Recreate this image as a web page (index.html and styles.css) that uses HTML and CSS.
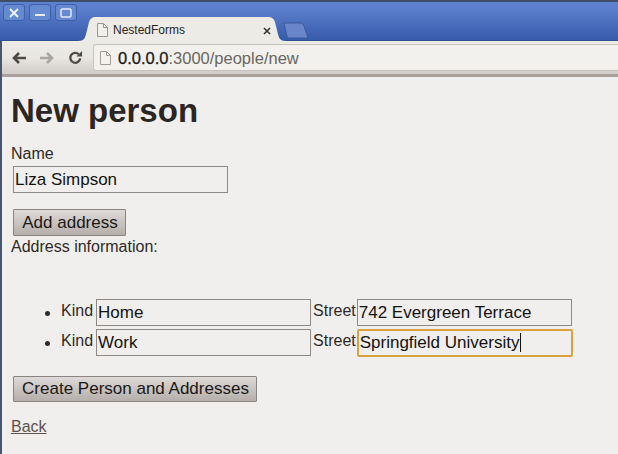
FILE: index.html
```html
<!DOCTYPE html>
<html lang="en">
<head>
<meta charset="utf-8">
<title>NestedForms</title>
<link rel="stylesheet" href="styles.css">
</head>
<body>
<div class="window">
  <header class="titlebar">
    <div class="wm-buttons">
      <span class="wm-btn"><svg width="14" height="14" viewBox="0 0 14 14"><path d="M3 3l8 8M11 3l-8 8" stroke="#eef2fa" stroke-width="2"/></svg></span>
      <span class="wm-btn"><svg width="14" height="14" viewBox="0 0 14 14"><path d="M2 9h10" stroke="#e4eaf6" stroke-width="2"/></svg></span>
      <span class="wm-btn"><svg width="14" height="14" viewBox="0 0 14 14"><rect x="2" y="3" width="10" height="8" rx="1.5" fill="none" stroke="#e4eaf6" stroke-width="1.5"/></svg></span>
    </div>
    <div class="tabstrip">
      <svg class="tab-shape" width="208" height="24" viewBox="0 0 210 26" preserveAspectRatio="none"><path d="M0 26c6 0 7-3 8-7l3-13c1-4 3-6 7-6h174c4 0 6 2 7 6l3 13c1 4 2 7 8 7z" fill="#ecebe6"/></svg>
      <div class="tab">
        <svg class="doc" width="11" height="14" viewBox="0 0 11 14"><path d="M.5.5h6l4 4v9h-10z" fill="#f1efe9" stroke="#9b9690"/><path d="M6.5.5v4h4" fill="none" stroke="#9b9690"/></svg>
        <span class="tab-title">NestedForms</span>
        <svg class="tab-close" width="8" height="8" viewBox="0 0 8 8"><path d="M1 1l6 6M7 1l-6 6" stroke="#38342f" stroke-width="1.6"/></svg>
      </div>
      <svg class="newtab" width="26" height="17" viewBox="0 0 26 17"><path d="M1 1h16c2 0 3 1 4 3l4 12H6c-1 0-2-1-2-2z" fill="#6a85c9" stroke="#3b5a9f"/></svg>
    </div>
  </header>
  <nav class="toolbar">
    <svg class="nav-arrow" width="15" height="14" viewBox="0 0 15 14"><path d="M15 7H3M8 2L3 7l5 5" fill="none" stroke="#4f4a45" stroke-width="2.6"/></svg>
    <svg class="nav-arrow" width="15" height="14" viewBox="0 0 15 14"><path d="M0 7h12M7 2l5 5-5 5" fill="none" stroke="#aaa69f" stroke-width="2.6"/></svg>
    <svg class="nav-reload" width="15" height="15" viewBox="0 0 16 15"><path d="M13 8.5A5.3 5.3 0 1 1 11.4 4" fill="none" stroke="#4f4a45" stroke-width="2.5"/><path d="M9 6.5h6v-6z" fill="#4f4a45"/></svg>
    <div class="omnibox">
      <svg width="11" height="14" viewBox="0 0 11 14"><path d="M.5.5h6l4 4v9h-10z" fill="#f4f2ee" stroke="#a09b95"/><path d="M6.5.5v4h4" fill="none" stroke="#a09b95"/></svg>
      <span class="url"><b>0.0.0.0</b>:3000/people/new</span>
    </div>
  </nav>
  <main class="page">
    <h1>New person</h1>
    <form class="person-form">
      <label class="name-label" for="name">Name</label>
      <input class="text-input name-input" id="name" type="text" value="Liza Simpson">
      <button class="btn add-btn" type="button">Add address</button>
      <div class="info">Address information:</div>
      <ul class="addresses">
        <li class="address"><span class="field-label">Kind</span><input class="text-input kind" type="text" value="Home"><span class="field-label street-label">Street</span><input class="text-input street" type="text" value="742 Evergreen Terrace"></li>
        <li class="address"><span class="field-label">Kind</span><input class="text-input kind" type="text" value="Work"><span class="field-label street-label">Street</span><span class="text-input street focused">Springfield University<i class="caret"></i></span></li>
      </ul>
      <button class="btn create-btn" type="button">Create Person and Addresses</button>
      <a class="back" href="#">Back</a>
    </form>
  </main>
</div>
</body>
</html>
```
FILE: styles.css
```css
* { box-sizing: border-box; }
html, body { margin: 0; padding: 0; }
body { width: 618px; height: 454px; overflow: hidden; background: #f0efed; font-family: "Liberation Sans", Arial, sans-serif; color: #2f2a27; }
.window { width: 618px; height: 454px; display: flex; flex-direction: column; border-left: 2px solid #46566f; }
.titlebar { height: 41px; flex: none; margin-left: -2px; display: flex; align-items: flex-start; background: linear-gradient(#5f82cf 0, #5b7dcc 8px, #365ba9 38px, #28457f 39px); border-top: 2px solid #414c66; }
.wm-buttons { display: flex; gap: 4px; width: 78px; padding: 2px 0 0 3px; }
.wm-btn { width: 22px; height: 17px; border: 1px solid #3d5fa8; border-radius: 3px; background: #648ad1; display: flex; align-items: center; justify-content: center; }
.tabstrip { position: relative; flex: 1; height: 39px; }
.tab-shape { position: absolute; left: 0; bottom: 0; }
.tab { position: absolute; left: 19px; top: 21px; width: 180px; display: flex; align-items: center; }
.tab-title { font-size: 12px; color: #29241f; margin-left: 5px; }
.tab-close { position: absolute; left: 166px; top: 4px; }
.newtab { position: absolute; left: 205px; top: 20px; }
.toolbar { height: 36px; flex: none; display: flex; align-items: center; padding: 0 0 0 9px; background: linear-gradient(#ecebe6 0, #e9e7e2 50%, #cfcbc6 100%); border-bottom: 3px solid #a8a19c; }
.toolbar svg { flex: none; }
.nav-arrow { margin-right: 14px; }
.nav-reload { margin-left: -1px; margin-right: 10px; }
.omnibox { flex: 1; height: 27px; padding: 1px 0 0 6px; display: flex; align-items: center; gap: 7px; background: #f2f1ee; border: 1px solid #c8c4bd; border-right: 0; border-radius: 3px 0 0 3px; }
.url { font-size: 16.5px; color: #6b6661; white-space: nowrap; }
.url b { font-weight: 400; color: #1d1a18; -webkit-text-stroke: .3px #1d1a18; }
.page { flex: 1; padding: 0 0 0 9px; }
h1 { margin: 15px 0 0; font-size: 33px; line-height: 37px; font-weight: 700; color: #2b2623; }
.person-form { display: flex; flex-direction: column; align-items: flex-start; font-size: 16px; }
.name-label { margin-top: 16px; line-height: 18px; }
.text-input { height: 27px; border: 1px solid #8f8985; border-radius: 0; background: #f0efed; padding: 1px; margin: 0; font: 17px "Liberation Sans", Arial, sans-serif; color: #141210; outline: 0; }
.name-input { width: 215px; margin: 3px 0 0 2px; }
.btn { margin-left: 2px; padding: 0 0 0 1px; border: 1px solid #8a8480; border-radius: 1px; background: linear-gradient(#dedad7, #b5aeaa); font: 17px "Liberation Sans", Arial, sans-serif; color: #1b1815; white-space: nowrap; }
.add-btn { margin-top: 16px; height: 27px; width: 113px; }
.info { line-height: 18px; margin-top: 2px; }
.addresses { list-style: disc; margin: 43px 0 0; padding: 0 0 0 50px; }
.address { height: 30px; white-space: nowrap; line-height: 27px; }
.address::marker { color: #2f2a27; }
.field-label { display: inline-block; vertical-align: top; line-height: 27px; margin-top: -2px; }
.street-label { margin-left: 2px; }
.kind { width: 215px; vertical-align: top; margin-left: 3px; }
.street { width: 215px; vertical-align: top; margin-left: 1px; }
span.street { display: inline-block; line-height: 24px; }
.focused { border: 2px solid #d9a23e; border-radius: 2px; padding: 0 1px; width: 216px; height: 28px; }
.caret { display: inline-block; width: 1px; height: 19px; background: #111; vertical-align: -4px; margin-left: 1px; }
.create-btn { margin-top: 17px; height: 26px; width: 244px; }
.back { margin-top: 16px; color: #5c534e; line-height: 18px; }
```
